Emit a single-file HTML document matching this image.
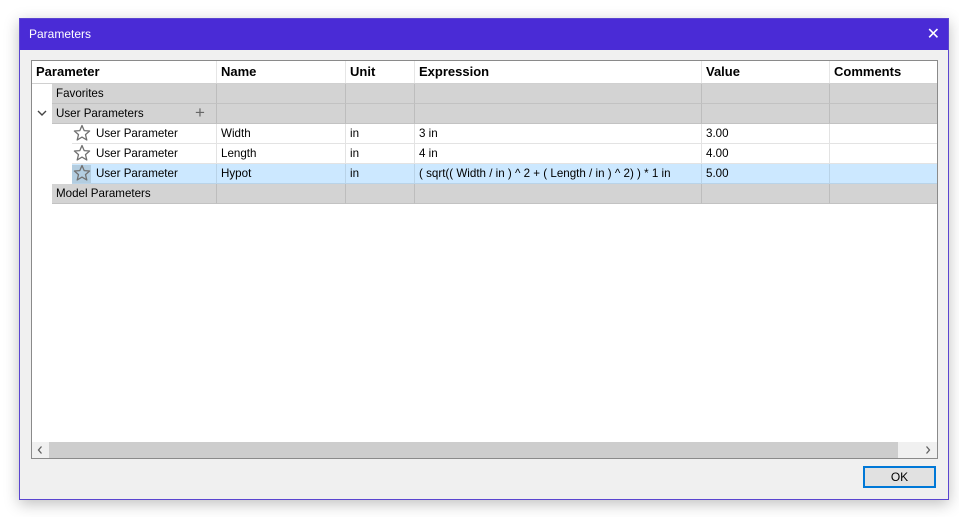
<!DOCTYPE html>
<html><head><meta charset="utf-8"><style>
*{margin:0;padding:0;box-sizing:border-box}
body{width:959px;height:517px;background:#fff;font-family:"Liberation Sans",sans-serif;font-size:12px;color:#000;position:relative;overflow:hidden}
.win{position:absolute;left:19px;top:18px;width:930px;height:482px;background:#f0f0f0;border:1px solid #5a45d0;box-shadow:0 4px 14px rgba(0,0,0,.25)}
.title{position:absolute;left:0;top:0;width:928px;height:31px;background:#4a2bd6;color:#fff;font-size:12px;line-height:31px;padding-left:9px}
.x{position:absolute;right:8px;top:0;line-height:31px;font-size:16px;color:#fff}
.tbl{position:absolute;left:11px;top:41px;width:907px;height:399px;background:#fff;border:1px solid #8a8a8a;overflow:hidden}
.c{position:absolute;height:20px;line-height:20px;white-space:nowrap;overflow:hidden;padding-left:4px;font-size:11.6px}
.h{font-weight:bold;font-size:13px;height:22px;line-height:22px;border-right:1px solid #e6e6e6;top:0}
.g{background:#d3d3d3;border-right:1px solid #bdbdbd;border-bottom:1px solid #c2c2c2}
.r{border-right:1px solid #e3e3e3;border-bottom:1px solid #e3e3e3}
.s{background:#cce8ff;border-right:1px solid #b9d3e8;border-bottom:1px solid #b9d3e8}
.sb{position:absolute;left:0;top:381px;width:905px;height:16px;background:#f0f0f0}
.thumb{position:absolute;left:17px;top:0;width:849px;height:16px;background:#cdcdcd}
.ok{position:absolute;left:843px;top:447px;width:73px;height:22px;border:2px solid #0078d7;background:#e1e1e1;text-align:center;line-height:18px;font-size:12px}
</style></head><body>
<div class="win">
<div class="title">Parameters<span class="x">✕</span></div>
<div class="tbl">
<div class="c h" style="left:0;width:185px">Parameter</div>
<div class="c h" style="left:185px;width:129px">Name</div>
<div class="c h" style="left:314px;width:69px">Unit</div>
<div class="c h" style="left:383px;width:287px">Expression</div>
<div class="c h" style="left:670px;width:128px">Value</div>
<div class="c h" style="left:798px;width:107px;border-right:none">Comments</div>
<div style="position:absolute;left:0;top:22px;width:905px;height:1px;background:#d0d0d0"></div>

<div class="c g" style="left:20px;top:23px;width:165px">Favorites</div>
<div class="c g" style="left:185px;top:23px;width:129px"></div>
<div class="c g" style="left:314px;top:23px;width:69px"></div>
<div class="c g" style="left:383px;top:23px;width:287px"></div>
<div class="c g" style="left:670px;top:23px;width:128px"></div>
<div class="c g" style="left:798px;top:23px;width:107px;border-right:none"></div>

<svg style="position:absolute;left:5px;top:49px" width="10" height="6"><path d="M1 1 L5 5 L9 1" stroke="#444" stroke-width="1.4" fill="none"/></svg>
<div class="c g" style="left:20px;top:43px;width:165px">User Parameters<span style="position:absolute;left:143px;top:0;font-size:17px;color:#666;line-height:18px">+</span></div>
<div class="c g" style="left:185px;top:43px;width:129px"></div>
<div class="c g" style="left:314px;top:43px;width:69px"></div>
<div class="c g" style="left:383px;top:43px;width:287px"></div>
<div class="c g" style="left:670px;top:43px;width:128px"></div>
<div class="c g" style="left:798px;top:43px;width:107px;border-right:none"></div>

<div class="c r" style="left:40px;top:63px;width:145px;padding-left:24px">User Parameter</div>
<div class="c r" style="left:185px;top:63px;width:129px">Width</div>
<div class="c r" style="left:314px;top:63px;width:69px">in</div>
<div class="c r" style="left:383px;top:63px;width:287px">3 in</div>
<div class="c r" style="left:670px;top:63px;width:128px">3.00</div>
<div class="c r" style="left:798px;top:63px;width:107px;border-right:none"></div>
<div class="c r" style="left:40px;top:83px;width:145px;padding-left:24px">User Parameter</div>
<div class="c r" style="left:185px;top:83px;width:129px">Length</div>
<div class="c r" style="left:314px;top:83px;width:69px">in</div>
<div class="c r" style="left:383px;top:83px;width:287px">4 in</div>
<div class="c r" style="left:670px;top:83px;width:128px">4.00</div>
<div class="c r" style="left:798px;top:83px;width:107px;border-right:none"></div>
<div class="c s" style="left:40px;top:103px;width:145px;padding-left:24px">User Parameter</div>
<div class="c s" style="left:185px;top:103px;width:129px">Hypot</div>
<div class="c s" style="left:314px;top:103px;width:69px">in</div>
<div class="c s" style="left:383px;top:103px;width:287px">( sqrt(( Width / in ) ^ 2 + ( Length / in ) ^ 2) ) * 1 in</div>
<div class="c s" style="left:670px;top:103px;width:128px">5.00</div>
<div class="c s" style="left:798px;top:103px;width:107px;border-right:none"></div>
<div style="position:absolute;left:40px;top:104px;width:19px;height:18px;background:#b3cde0"></div>

<svg style="position:absolute;left:41px;top:63px" width="18" height="60" viewBox="0 0 18 60">
<g fill="none" stroke="#707070" stroke-width="1.3" stroke-linejoin="round">
<path d="M9 1.5 L11.2 6.6 L16.6 7 L12.5 10.6 L13.8 16 L9 13.1 L4.2 16 L5.5 10.6 L1.4 7 L6.8 6.6 Z"/>
<path transform="translate(0,20)" d="M9 1.5 L11.2 6.6 L16.6 7 L12.5 10.6 L13.8 16 L9 13.1 L4.2 16 L5.5 10.6 L1.4 7 L6.8 6.6 Z"/>
<path transform="translate(0,40)" d="M9 1.5 L11.2 6.6 L16.6 7 L12.5 10.6 L13.8 16 L9 13.1 L4.2 16 L5.5 10.6 L1.4 7 L6.8 6.6 Z"/>
</g></svg>

<div class="c g" style="left:20px;top:123px;width:165px">Model Parameters</div>
<div class="c g" style="left:185px;top:123px;width:129px"></div>
<div class="c g" style="left:314px;top:123px;width:69px"></div>
<div class="c g" style="left:383px;top:123px;width:287px"></div>
<div class="c g" style="left:670px;top:123px;width:128px"></div>
<div class="c g" style="left:798px;top:123px;width:107px;border-right:none"></div>

<div class="sb"><div class="thumb"></div>
<svg style="position:absolute;left:5px;top:4px" width="6" height="8"><path d="M4.5 0.5 L1.5 4 L4.5 7.5" stroke="#606060" stroke-width="1.3" fill="none"/></svg>
<svg style="position:absolute;left:893px;top:4px" width="6" height="8"><path d="M1.5 0.5 L4.5 4 L1.5 7.5" stroke="#606060" stroke-width="1.3" fill="none"/></svg>
</div>
</div>
<div class="ok">OK</div>
</div>
</body></html>
